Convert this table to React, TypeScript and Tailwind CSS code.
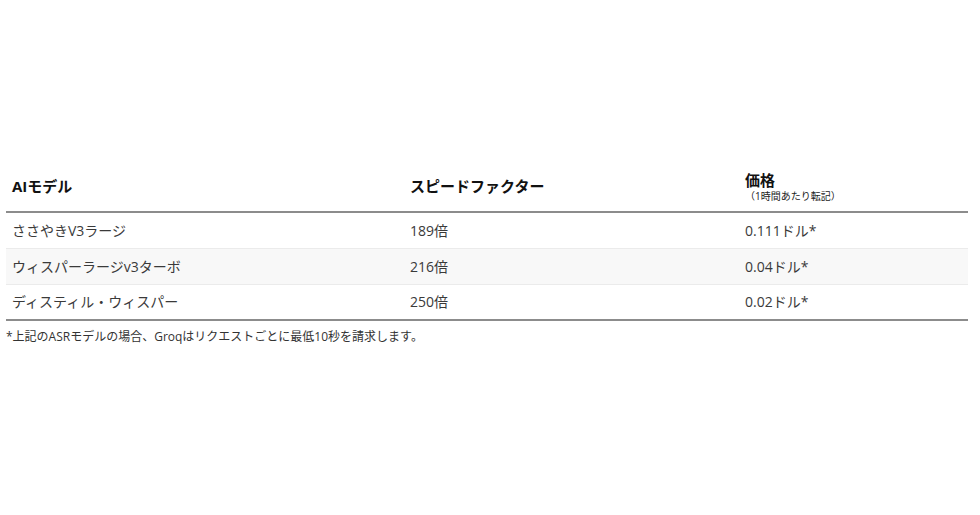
import React from "react"

const rows = [
  { model: "ささやきV3ラージ", speed: "189倍", price: "0.111ドル*" },
  { model: "ウィスパーラージv3ターボ", speed: "216倍", price: "0.04ドル*" },
  { model: "ディスティル・ウィスパー", speed: "250倍", price: "0.02ドル*" },
]

export default function App() {
  return (
    <div
      className="w-[980px] h-[515px] bg-white pt-[165px] px-[6px] text-[#3a3a3a]"
      style={{ fontFamily: '"Open Sans", "Noto Sans CJK JP", sans-serif' }}
    >
      <table className="w-[962px] border-collapse table-fixed">
        <colgroup>
          <col className="w-[398px]" />
          <col className="w-[335px]" />
          <col />
        </colgroup>
        <thead>
          <tr className="h-[47px] border-b-2 border-[#8c8c8c]">
            <th className="text-left align-middle pl-[6px] pb-[4px] text-[15px] font-bold text-[#111]">AIモデル</th>
            <th className="text-left align-middle pl-[6px] pb-[4px] text-[15px] font-bold text-[#111]">スピードファクター</th>
            <th className="text-left align-middle pl-[6px] pb-[2px] font-bold text-[#111]">
              <div className="text-[15px] leading-[18px]">価格</div>
              <div className="text-[10px] leading-[14px] font-normal text-[#222]">（1時間あたり転記）</div>
            </th>
          </tr>
        </thead>
        <tbody>
          {rows.map((r, i) => (
            <tr
              key={r.model}
              className={
                "h-[36px] text-[14px] " +
                (i === rows.length - 1
                  ? "border-b-2 border-[#8c8c8c]"
                  : "border-b border-[#ebebeb]") +
                (i === 1 ? " bg-[#f8f8f8]" : "")
              }
            >
              <td className="pl-[6px] align-middle">{r.model}</td>
              <td className="pl-[6px] align-middle">{r.speed}</td>
              <td className="pl-[6px] align-middle">{r.price}</td>
            </tr>
          ))}
        </tbody>
      </table>
      <p className="mt-[7px] text-[12px] text-[#333]">*上記のASRモデルの場合、Groqはリクエストごとに最低10秒を請求します。</p>
    </div>
  )
}
